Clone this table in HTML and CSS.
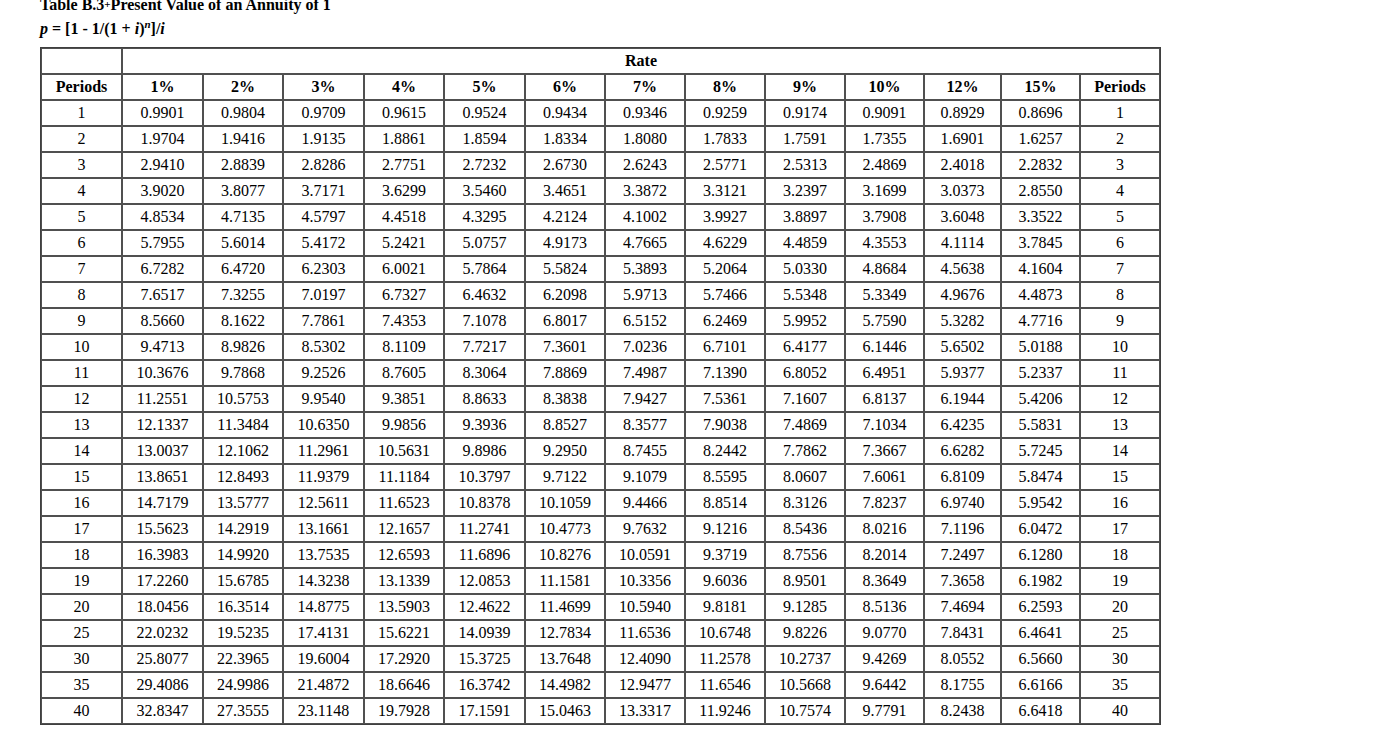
FILE: index.html
```html
<!DOCTYPE html>
<html>
<head>
<meta charset="utf-8">
<link rel="stylesheet" href="styles.css">
</head>
<body>
<div class="page">
  <div class="title">Table B.3<span class="plus">+</span>Present Value of an Annuity of 1</div>
  <div class="formula"><i>p</i> = [1 - 1/(1 + <i>i</i>)<sup><i>n</i></sup>]/<i>i</i></div>
  <table class="annuity">
    <colgroup>
      <col class="c81"><col class="c81"><col class="c80"><col class="c81"><col class="c80"><col class="c81"><col class="c80"><col class="c80"><col class="c80"><col class="c80"><col class="c79"><col class="c77"><col class="c79"><col class="c80">
    </colgroup>
    <thead>
      <tr><th></th><th colspan="13">Rate</th></tr>
      <tr><th>Periods</th><th>1%</th><th>2%</th><th>3%</th><th>4%</th><th>5%</th><th>6%</th><th>7%</th><th>8%</th><th>9%</th><th>10%</th><th>12%</th><th>15%</th><th>Periods</th></tr>
    </thead>
    <tbody>
      <tr><td>1</td><td>0.9901</td><td>0.9804</td><td>0.9709</td><td>0.9615</td><td>0.9524</td><td>0.9434</td><td>0.9346</td><td>0.9259</td><td>0.9174</td><td>0.9091</td><td>0.8929</td><td>0.8696</td><td>1</td></tr>
      <tr><td>2</td><td>1.9704</td><td>1.9416</td><td>1.9135</td><td>1.8861</td><td>1.8594</td><td>1.8334</td><td>1.8080</td><td>1.7833</td><td>1.7591</td><td>1.7355</td><td>1.6901</td><td>1.6257</td><td>2</td></tr>
      <tr><td>3</td><td>2.9410</td><td>2.8839</td><td>2.8286</td><td>2.7751</td><td>2.7232</td><td>2.6730</td><td>2.6243</td><td>2.5771</td><td>2.5313</td><td>2.4869</td><td>2.4018</td><td>2.2832</td><td>3</td></tr>
      <tr><td>4</td><td>3.9020</td><td>3.8077</td><td>3.7171</td><td>3.6299</td><td>3.5460</td><td>3.4651</td><td>3.3872</td><td>3.3121</td><td>3.2397</td><td>3.1699</td><td>3.0373</td><td>2.8550</td><td>4</td></tr>
      <tr><td>5</td><td>4.8534</td><td>4.7135</td><td>4.5797</td><td>4.4518</td><td>4.3295</td><td>4.2124</td><td>4.1002</td><td>3.9927</td><td>3.8897</td><td>3.7908</td><td>3.6048</td><td>3.3522</td><td>5</td></tr>
      <tr><td>6</td><td>5.7955</td><td>5.6014</td><td>5.4172</td><td>5.2421</td><td>5.0757</td><td>4.9173</td><td>4.7665</td><td>4.6229</td><td>4.4859</td><td>4.3553</td><td>4.1114</td><td>3.7845</td><td>6</td></tr>
      <tr><td>7</td><td>6.7282</td><td>6.4720</td><td>6.2303</td><td>6.0021</td><td>5.7864</td><td>5.5824</td><td>5.3893</td><td>5.2064</td><td>5.0330</td><td>4.8684</td><td>4.5638</td><td>4.1604</td><td>7</td></tr>
      <tr><td>8</td><td>7.6517</td><td>7.3255</td><td>7.0197</td><td>6.7327</td><td>6.4632</td><td>6.2098</td><td>5.9713</td><td>5.7466</td><td>5.5348</td><td>5.3349</td><td>4.9676</td><td>4.4873</td><td>8</td></tr>
      <tr><td>9</td><td>8.5660</td><td>8.1622</td><td>7.7861</td><td>7.4353</td><td>7.1078</td><td>6.8017</td><td>6.5152</td><td>6.2469</td><td>5.9952</td><td>5.7590</td><td>5.3282</td><td>4.7716</td><td>9</td></tr>
      <tr><td>10</td><td>9.4713</td><td>8.9826</td><td>8.5302</td><td>8.1109</td><td>7.7217</td><td>7.3601</td><td>7.0236</td><td>6.7101</td><td>6.4177</td><td>6.1446</td><td>5.6502</td><td>5.0188</td><td>10</td></tr>
      <tr><td>11</td><td>10.3676</td><td>9.7868</td><td>9.2526</td><td>8.7605</td><td>8.3064</td><td>7.8869</td><td>7.4987</td><td>7.1390</td><td>6.8052</td><td>6.4951</td><td>5.9377</td><td>5.2337</td><td>11</td></tr>
      <tr><td>12</td><td>11.2551</td><td>10.5753</td><td>9.9540</td><td>9.3851</td><td>8.8633</td><td>8.3838</td><td>7.9427</td><td>7.5361</td><td>7.1607</td><td>6.8137</td><td>6.1944</td><td>5.4206</td><td>12</td></tr>
      <tr><td>13</td><td>12.1337</td><td>11.3484</td><td>10.6350</td><td>9.9856</td><td>9.3936</td><td>8.8527</td><td>8.3577</td><td>7.9038</td><td>7.4869</td><td>7.1034</td><td>6.4235</td><td>5.5831</td><td>13</td></tr>
      <tr><td>14</td><td>13.0037</td><td>12.1062</td><td>11.2961</td><td>10.5631</td><td>9.8986</td><td>9.2950</td><td>8.7455</td><td>8.2442</td><td>7.7862</td><td>7.3667</td><td>6.6282</td><td>5.7245</td><td>14</td></tr>
      <tr><td>15</td><td>13.8651</td><td>12.8493</td><td>11.9379</td><td>11.1184</td><td>10.3797</td><td>9.7122</td><td>9.1079</td><td>8.5595</td><td>8.0607</td><td>7.6061</td><td>6.8109</td><td>5.8474</td><td>15</td></tr>
      <tr><td>16</td><td>14.7179</td><td>13.5777</td><td>12.5611</td><td>11.6523</td><td>10.8378</td><td>10.1059</td><td>9.4466</td><td>8.8514</td><td>8.3126</td><td>7.8237</td><td>6.9740</td><td>5.9542</td><td>16</td></tr>
      <tr><td>17</td><td>15.5623</td><td>14.2919</td><td>13.1661</td><td>12.1657</td><td>11.2741</td><td>10.4773</td><td>9.7632</td><td>9.1216</td><td>8.5436</td><td>8.0216</td><td>7.1196</td><td>6.0472</td><td>17</td></tr>
      <tr><td>18</td><td>16.3983</td><td>14.9920</td><td>13.7535</td><td>12.6593</td><td>11.6896</td><td>10.8276</td><td>10.0591</td><td>9.3719</td><td>8.7556</td><td>8.2014</td><td>7.2497</td><td>6.1280</td><td>18</td></tr>
      <tr><td>19</td><td>17.2260</td><td>15.6785</td><td>14.3238</td><td>13.1339</td><td>12.0853</td><td>11.1581</td><td>10.3356</td><td>9.6036</td><td>8.9501</td><td>8.3649</td><td>7.3658</td><td>6.1982</td><td>19</td></tr>
      <tr><td>20</td><td>18.0456</td><td>16.3514</td><td>14.8775</td><td>13.5903</td><td>12.4622</td><td>11.4699</td><td>10.5940</td><td>9.8181</td><td>9.1285</td><td>8.5136</td><td>7.4694</td><td>6.2593</td><td>20</td></tr>
      <tr><td>25</td><td>22.0232</td><td>19.5235</td><td>17.4131</td><td>15.6221</td><td>14.0939</td><td>12.7834</td><td>11.6536</td><td>10.6748</td><td>9.8226</td><td>9.0770</td><td>7.8431</td><td>6.4641</td><td>25</td></tr>
      <tr><td>30</td><td>25.8077</td><td>22.3965</td><td>19.6004</td><td>17.2920</td><td>15.3725</td><td>13.7648</td><td>12.4090</td><td>11.2578</td><td>10.2737</td><td>9.4269</td><td>8.0552</td><td>6.5660</td><td>30</td></tr>
      <tr><td>35</td><td>29.4086</td><td>24.9986</td><td>21.4872</td><td>18.6646</td><td>16.3742</td><td>14.4982</td><td>12.9477</td><td>11.6546</td><td>10.5668</td><td>9.6442</td><td>8.1755</td><td>6.6166</td><td>35</td></tr>
      <tr><td>40</td><td>32.8347</td><td>27.3555</td><td>23.1148</td><td>19.7928</td><td>17.1591</td><td>15.0463</td><td>13.3317</td><td>11.9246</td><td>10.7574</td><td>9.7791</td><td>8.2438</td><td>6.6418</td><td>40</td></tr>
    </tbody>
  </table>
</div>
</body>
</html>
```

FILE: styles.css
```css
html, body {
  margin: 0;
  padding: 0;
  background: #ffffff;
}

body {
  font-family: "Liberation Serif", "Times New Roman", serif;
  color: #000000;
  overflow: hidden;
}

.page {
  padding-left: 40px;
}

.title {
  margin-top: -8px;
  font-size: 16px;
  line-height: 24px;
  font-weight: bold;
}

.title .plus {
  font-size: 11px;
  vertical-align: 2px;
}

.formula {
  font-size: 16px;
  line-height: 24px;
  font-weight: bold;
  margin-bottom: 6px;
}

.formula sup {
  font-size: 11px;
  line-height: 0;
  vertical-align: 6px;
}

.annuity {
  border-collapse: separate;
  border-spacing: 0;
  border: 1px solid #3f3f3f;
  table-layout: fixed;
  width: 1121px;
  font-family: "Liberation Serif", "Times New Roman", serif;
  font-size: 16px;
}

.annuity .c81 { width: 81px; }
.annuity .c80 { width: 80px; }
.annuity .c79 { width: 79px; }
.annuity .c77 { width: 77px; }

.annuity th,
.annuity td {
  font-family: "Liberation Serif", "Times New Roman", serif;
  font-size: 16px;
  border: 1px solid #505050;
  padding: 3px 2px;
  line-height: 18px;
  height: 18px;
  text-align: center;
  white-space: nowrap;
}

.annuity td {
  font-weight: normal;
}

.annuity th {
  font-weight: bold;
}
```
